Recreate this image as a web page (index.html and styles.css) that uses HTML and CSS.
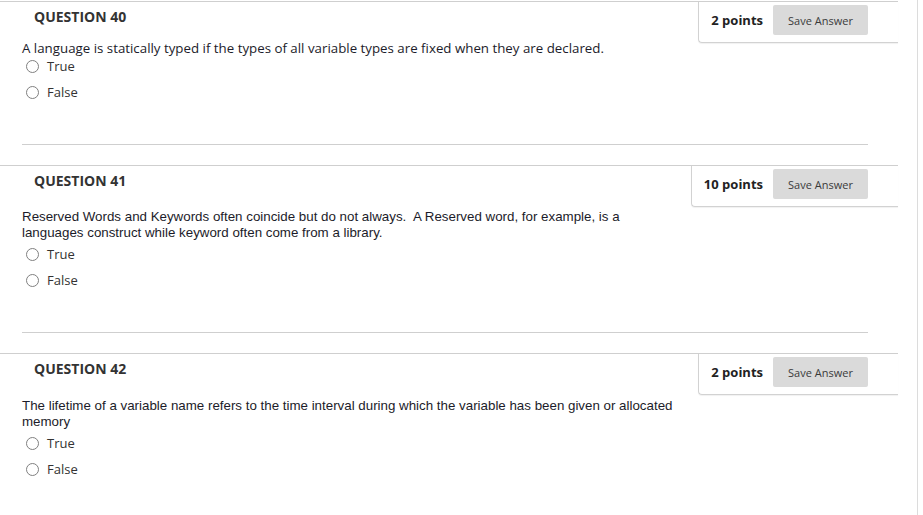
FILE: index.html
```html
<!DOCTYPE html>
<html>
<head>
<meta charset="utf-8">
<link rel="stylesheet" href="styles.css">
</head>
<body>
<div class="page">
  <div class="questions">
    <section class="question">
      <h2 class="q-title">QUESTION 40</h2>
      <div class="points-box"><span class="points">2 points</span><span class="save-btn">Save Answer</span></div>
      <div class="q-body">
        <p class="q-text sans">A language is statically typed if the types of all variable types are fixed when they are declared.</p>
        <ul class="options first">
          <li class="option"><span class="radio"></span><span class="label">True</span></li>
          <li class="option"><span class="radio"></span><span class="label">False</span></li>
        </ul>
      </div>
      <hr class="sep">
    </section>
    <section class="question">
      <h2 class="q-title">QUESTION 41</h2>
      <div class="points-box"><span class="points">10 points</span><span class="save-btn">Save Answer</span></div>
      <div class="q-body">
        <p class="q-text arial">Reserved Words and Keywords often coincide but do not always.&nbsp; A Reserved word, for example, is a languages construct while keyword often come from a library.</p>
        <ul class="options">
          <li class="option"><span class="radio"></span><span class="label">True</span></li>
          <li class="option"><span class="radio"></span><span class="label">False</span></li>
        </ul>
      </div>
      <hr class="sep">
    </section>
    <section class="question">
      <h2 class="q-title">QUESTION 42</h2>
      <div class="points-box"><span class="points">2 points</span><span class="save-btn">Save Answer</span></div>
      <div class="q-body">
        <p class="q-text arial third">The lifetime of a variable name refers to the time interval during which the variable has been given or allocated memory</p>
        <ul class="options">
          <li class="option"><span class="radio"></span><span class="label">True</span></li>
          <li class="option"><span class="radio"></span><span class="label">False</span></li>
        </ul>
      </div>
      <hr class="sep">
    </section>
  </div>
</div>
</body>
</html>
```
FILE: styles.css
```css
html, body {
  margin: 0;
  padding: 0;
  background: #ffffff;
}
body {
  font-family: "Open Sans", "Liberation Sans", sans-serif;
  color: #333333;
  overflow: hidden;
}
.page {
  width: 918px;
  height: 515px;
  box-sizing: border-box;
  overflow: hidden;
  padding-top: 1px;
  padding-right: 19px;
  border-right: 1px solid #dcdcdc;
}
.questions {
  display: flex;
  flex-direction: column;
}
.question {
  border-top: 1px solid #cfcfcf;
  display: grid;
  grid-template-columns: 1fr auto;
  grid-template-rows: auto auto auto;
  margin-bottom: 20px;
}
.q-title {
  grid-column: 1;
  grid-row: 1;
  margin: 0;
  padding: 5px 0 12px 34px;
  font-size: 14px;
  line-height: 20px;
  font-weight: 700;
  color: #333333;
}
.points-box {
  grid-column: 2;
  grid-row: 1 / span 2;
  align-self: start;
  display: flex;
  align-items: center;
  gap: 10px;
  padding: 3px 30px 7px 12px;
  border-left: 1px solid #d2d2d2;
  border-bottom: 1px solid #d2d2d2;
  border-bottom-left-radius: 4px;
  box-shadow: 0 1px 1px rgba(0, 0, 0, 0.06);
}
.points {
  font-size: 13px;
  font-weight: 700;
  color: #222222;
  line-height: 18px;
}
.save-btn {
  width: 95px;
  height: 30px;
  background: #dadada;
  border-radius: 2px;
  font-size: 11px;
  color: #3a3a3a;
  display: flex;
  align-items: center;
  justify-content: center;
}
.q-body {
  grid-column: 1;
  grid-row: 2 / span 2;
  padding-left: 22px;
}
.q-text {
  margin: 0;
  width: 655px;
  color: #1c1c2a;
}
.q-text.sans {
  font-family: "Open Sans", sans-serif;
  font-size: 13.3px;
  line-height: 18px;
}
.q-text.arial {
  font-family: "Liberation Sans", Arial, sans-serif;
  font-size: 13.33px;
  line-height: 16px;
  margin-top: 6px;
  margin-bottom: 4px;
}
.q-text.third {
  margin-top: 7px;
}
.options {
  list-style: none;
  margin: 0;
  padding: 0;
  display: flex;
  flex-direction: column;
  gap: 8px;
}
.option {
  display: flex;
  align-items: center;
  height: 18px;
  padding-left: 4px;
  gap: 8px;
}
.radio {
  width: 13px;
  height: 13px;
  box-sizing: border-box;
  border: 1px solid #808080;
  border-radius: 50%;
  background: #fff;
}
.label {
  font-size: 13px;
  color: #333333;
}
.sep {
  grid-column: 1 / span 2;
  grid-row: 4;
  margin: 43px 30px 0 22px;
  border: 0;
  border-top: 1px solid #cfcfcf;
  height: 0;
}
```
